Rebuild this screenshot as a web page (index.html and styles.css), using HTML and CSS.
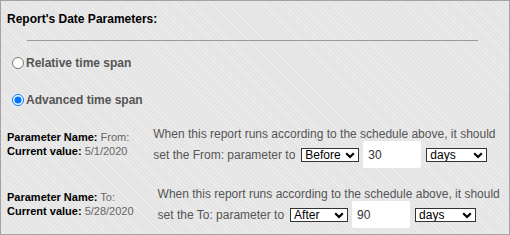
FILE: index.html
```html
<!DOCTYPE html>
<html>
    <head>
    <link rel="stylesheet" href="styles.css">
    </head>
    <body>
        <div class="panel">
            <div class="title">Report's Date Parameters:</div>
            <hr class="rule">

            <label class="span-choice">
                <input type="radio" name="span" class="radio">Relative time span
            </label>
            <label class="span-choice second">
                <input type="radio" name="span" class="radio" checked>Advanced time span
            </label>

            <div class="param-row">
                <div class="param-info">
                    <div><b>Parameter Name:</b> <span class="param-val">From:</span></div>
                    <div><b>Current value:</b> <span class="param-val">5/1/2020</span></div>
                </div>
                <div class="param-text">
                    <div class="line-one">When this report runs according to the schedule above, it should</div>
                    <div class="line-two">
                        <span>set the From: parameter to</span>
                        <span class="select-wrap when-select">
                            <select class="pick"><option>Before</option><option>After</option></select>
                            <svg class="chev" width="10" height="7" viewBox="0 0 10 7"><path d="M1.2 1.2 L5 5 L8.8 1.2" fill="none" stroke="#000" stroke-width="2.2"/></svg>
                        </span>
                        <input type="text" class="amount" value="30">
                        <span class="select-wrap unit-select">
                            <select class="pick"><option>days</option><option>weeks</option><option>months</option></select>
                            <svg class="chev" width="10" height="7" viewBox="0 0 10 7"><path d="M1.2 1.2 L5 5 L8.8 1.2" fill="none" stroke="#000" stroke-width="2.2"/></svg>
                        </span>
                    </div>
                </div>
            </div>

            <div class="param-row">
                <div class="param-info">
                    <div><b>Parameter Name:</b> <span class="param-val">To:</span></div>
                    <div><b>Current value:</b> <span class="param-val">5/28/2020</span></div>
                </div>
                <div class="param-text">
                    <div class="line-one">When this report runs according to the schedule above, it should</div>
                    <div class="line-two">
                        <span>set the To: parameter to</span>
                        <span class="select-wrap when-select">
                            <select class="pick"><option>After</option><option>Before</option></select>
                            <svg class="chev" width="10" height="7" viewBox="0 0 10 7"><path d="M1.2 1.2 L5 5 L8.8 1.2" fill="none" stroke="#000" stroke-width="2.2"/></svg>
                        </span>
                        <input type="text" class="amount" value="90">
                        <span class="select-wrap unit-select">
                            <select class="pick"><option>days</option><option>weeks</option><option>months</option></select>
                            <svg class="chev" width="10" height="7" viewBox="0 0 10 7"><path d="M1.2 1.2 L5 5 L8.8 1.2" fill="none" stroke="#000" stroke-width="2.2"/></svg>
                        </span>
                    </div>
                </div>
            </div>
        </div>
    </body>
</html>
```

FILE: styles.css
```css
body{
  margin:0;
  font-family:"Liberation Sans", Arial, sans-serif;
}
.panel{
  width:510px;
  height:235px;
  box-sizing:border-box;
  border:1px solid #a3a3a3;
  padding:11px 6px 0 6px;
  background-color:#e6e6e6;
  background-image:repeating-linear-gradient(45deg, #e4e4e4 0px, #e4e4e4 2px, #ececec 2px, #ececec 3px);
}
.title{
  font-size:12px;
  font-weight:bold;
  line-height:14px;
  color:#000;
}
.rule{
  border:0;
  border-top:1px solid #9a9a9a;
  height:0;
  margin:14px 25px 0 20px;
}
.span-choice{
  display:flex;
  align-items:center;
  height:16px;
  margin-top:14px;
  font-size:12px;
  font-weight:bold;
  color:#555;
  line-height:16px;
}
.span-choice.second{
  margin-top:21px;
}
.radio{
  width:12px;
  height:12px;
  margin:0 2px 0 5px;
}
.param-row{
  display:flex;
  gap:24px;
  margin-top:19px;
}
.param-info{
  font-size:11px;
  line-height:14px;
  padding-top:3px;
  color:#000;
  white-space:nowrap;
}
.param-val{
  color:#666;
}
.param-text{
  font-size:12px;
  color:#555;
  white-space:nowrap;
}
.line-one{
  line-height:14px;
}
.line-two{
  display:flex;
  align-items:baseline;
  line-height:14px;
}
.select-wrap{
  position:relative;
  display:inline-block;
}
.when-select{
  margin-left:6px;
}
.unit-select{
  margin-left:5px;
}
.pick{
  appearance:none;
  -webkit-appearance:none;
  height:14px;
  box-sizing:border-box;
  border:1px solid #333;
  border-radius:0;
  background:#fff;
  font-family:"Liberation Sans", Arial, sans-serif;
  font-size:12px;
  line-height:12px;
  color:#000;
  padding:0 0 0 3px;
  margin:0;
}
.when-select .pick{
  width:58px;
}
.unit-select .pick{
  width:61px;
}
.chev{
  position:absolute;
  right:4px;
  top:4px;
  pointer-events:none;
}
.amount{
  width:58px;
  height:27px;
  box-sizing:border-box;
  border:0;
  border-radius:2px;
  background:#fff;
  margin:0 0 0 4px;
  padding:0 0 0 5px;
  font-family:"Liberation Sans", Arial, sans-serif;
  font-size:12px;
  color:#333;
}
```
